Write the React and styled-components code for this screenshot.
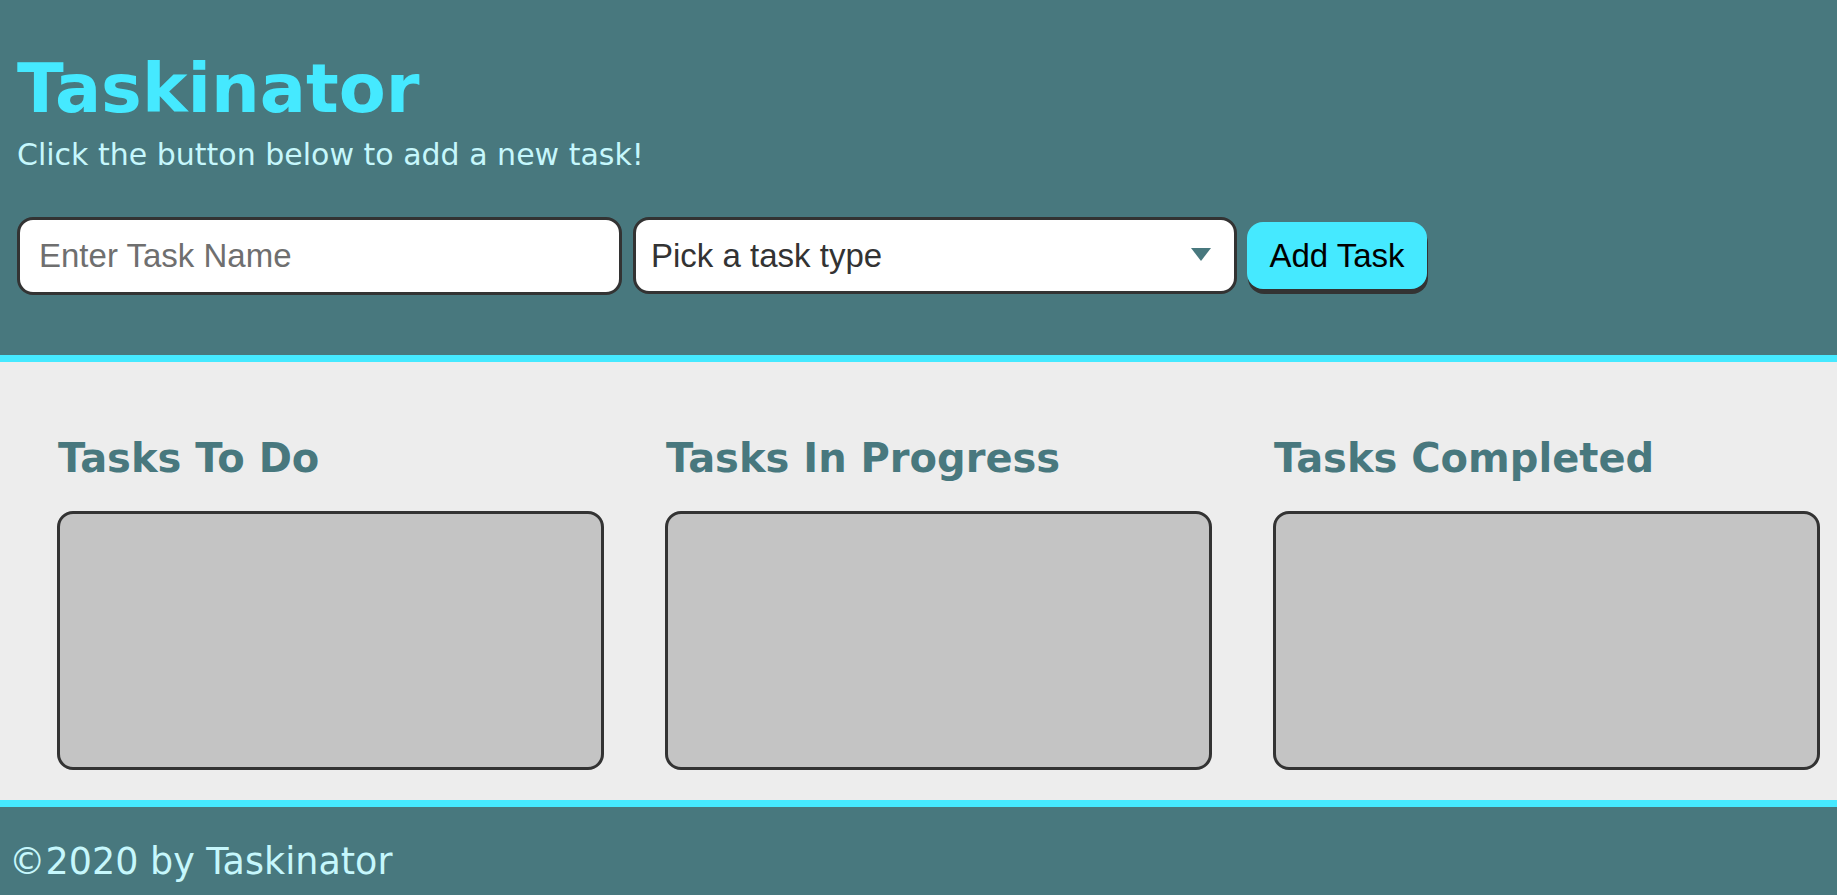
import styled, { createGlobalStyle } from "styled-components";

const teal = "#48787e";
const cyan = "#45e9ff";
const pale = "#c6f7fc";

const GlobalStyle = createGlobalStyle`
  body {
    margin: 0;
    background: #ededed;
    font-family: "DejaVu Sans", Verdana, sans-serif;
  }
  * {
    box-sizing: border-box;
  }
`;

const Header = styled.header`
  background: ${teal};
  border-bottom: 7px solid ${cyan};
  padding: 54px 16px 60px 17px;
`;

const Title = styled.h1`
  margin: 0;
  color: ${cyan};
  font-size: 68.5px;
  line-height: 1;
  font-weight: bold;
`;

const Subtitle = styled.p`
  margin: 17px 0 0;
  color: ${pale};
  font-size: 30px;
  line-height: 1;
`;

const Form = styled.form`
  display: flex;
  align-items: center;
  gap: 10px;
  margin-top: 47px;
`;

const TextInput = styled.input`
  width: 605px;
  height: 78px;
  border: 3px solid #333;
  border-radius: 16px;
  padding: 0 19px;
  font-family: "Liberation Sans", Arial, sans-serif;
  font-size: 33px;
  color: #333;
  background: #fff;
  outline: none;

  &::placeholder {
    color: #6f6f6f;
  }
`;

const SelectWrap = styled.div`
  position: relative;
  margin-left: 1px;
`;

const Select = styled.select`
  appearance: none;
  width: 604px;
  height: 77px;
  border: 3px solid #333;
  border-radius: 16px;
  padding: 0 60px 0 15px;
  font-family: "Liberation Sans", Arial, sans-serif;
  font-size: 33px;
  color: #333;
  background: #fff;
  outline: none;
`;

const Arrow = styled.svg`
  position: absolute;
  right: 26px;
  top: 31px;
  pointer-events: none;
`;

const AddButton = styled.button`
  width: 180px;
  height: 67px;
  border: none;
  border-radius: 16px;
  background: ${cyan};
  box-shadow: 1px 5px 0 #333;
  font-family: "Liberation Sans", Arial, sans-serif;
  font-size: 33px;
  color: #000;
  padding: 0;
  cursor: pointer;
`;

const Main = styled.main`
  display: grid;
  grid-template-columns: repeat(3, 1fr);
  column-gap: 61px;
  padding: 76px 17px 30px 57px;
  background: #ededed;
`;

const Column = styled.section`
  display: flex;
  flex-direction: column;
  gap: 33px;
`;

const ColumnTitle = styled.h2`
  margin: 0 0 0 1px;
  color: ${teal};
  font-size: 40px;
  line-height: 1;
  font-weight: bold;
`;

const TaskList = styled.ul`
  margin: 0;
  padding: 0;
  list-style: none;
  height: 259px;
  background: #c4c4c4;
  border: 3px solid #333;
  border-radius: 16px;
`;

const Footer = styled.footer`
  background: ${teal};
  border-top: 7px solid ${cyan};
  padding: 37px 9px 37px;
`;

const FooterText = styled.h3`
  margin: 0;
  color: ${pale};
  font-size: 36.5px;
  line-height: 1;
  font-weight: normal;
`;

const columns = ["Tasks To Do", "Tasks In Progress", "Tasks Completed"];

export default function App() {
  return (
    <>
      <GlobalStyle />
      <Header>
        <Title>Taskinator</Title>
        <Subtitle>Click the button below to add a new task!</Subtitle>
        <Form onSubmit={(e) => e.preventDefault()}>
          <TextInput type="text" placeholder="Enter Task Name" />
          <SelectWrap>
            <Select defaultValue="">
              <option value="" disabled>
                Pick a task type
              </option>
              <option value="Web">Web</option>
              <option value="Mobile">Mobile</option>
              <option value="Print">Print</option>
            </Select>
            <Arrow width="20" height="13" viewBox="0 0 20 13">
              <polygon points="0,0 20,0 10,13" fill={teal} />
            </Arrow>
          </SelectWrap>
          <AddButton type="submit">Add Task</AddButton>
        </Form>
      </Header>
      <Main>
        {columns.map((title) => (
          <Column key={title}>
            <ColumnTitle>{title}</ColumnTitle>
            <TaskList />
          </Column>
        ))}
      </Main>
      <Footer>
        <FooterText>&copy;2020 by Taskinator</FooterText>
      </Footer>
    </>
  );
}
